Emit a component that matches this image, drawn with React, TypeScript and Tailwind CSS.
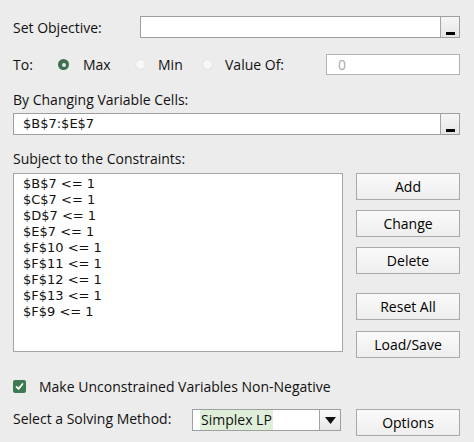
import React from 'react';

const constraints = [
  '$B$7 <= 1',
  '$C$7 <= 1',
  '$D$7 <= 1',
  '$E$7 <= 1',
  '$F$10 <= 1',
  '$F$11 <= 1',
  '$F$12 <= 1',
  '$F$13 <= 1',
  '$F$9 <= 1',
];

const cellFont = { fontFamily: '"DejaVu Sans", "Open Sans", sans-serif' };

const RefButton = () => (
  <div className="w-[19px] h-full border-l border-[#a3a3a3] bg-gradient-to-b from-[#f6f6f6] to-[#e6e6e6] flex items-end justify-center pb-[2px]">
    <div className="w-[9px] h-[3px] bg-black" />
  </div>
);

const Radio = ({ checked }: { checked?: boolean }) =>
  checked ? (
    <span className="w-[11px] h-[11px] rounded-full bg-[#3f6f52] flex items-center justify-center shrink-0">
      <span className="w-[4px] h-[4px] rounded-full bg-[#dfe9e2]" />
    </span>
  ) : (
    <span className="w-[11px] h-[11px] rounded-full bg-[#f7f7f7] border border-[#e2e2e2] shrink-0" />
  );

const Btn = ({ label, className = '' }: { label: string; className?: string }) => (
  <button
    className={`w-[104px] h-[27px] border border-[#a9a9a9] bg-gradient-to-b from-[#fafafa] to-[#eeeeee] text-[14px] text-black flex items-center justify-center ${className}`}
  >
    {label}
  </button>
);

export default function App() {
  return (
    <div
      className="w-[474px] h-[442px] overflow-hidden bg-[#ececec] text-[14px] text-[#111]"
      style={{ fontFamily: '"Open Sans", "Liberation Sans", sans-serif' }}
    >
      <div className="pl-[13px] pr-[14px] pt-[16px]">
        {/* Set Objective */}
        <div className="flex items-center h-[22px]">
          <span className="w-[127px]">Set Objective:</span>
          <div className="flex-1 h-[22px] bg-white border border-[#9f9f9f] flex justify-end">
            <RefButton />
          </div>
        </div>

        {/* To row */}
        <div className="flex items-center h-[21px] mt-[16px]">
          <span className="w-[45px]">To:</span>
          <Radio checked />
          <span className="ml-[14px] w-[52px]">Max</span>
          <Radio />
          <span className="ml-[12px] w-[44px]">Min</span>
          <Radio />
          <span className="ml-[12px] flex-1">Value Of:</span>
          <div className="w-[134px] h-[21px] bg-white border border-[#b3b3b3] pl-[11px] text-[#a8a8a8] flex items-center">
            0
          </div>
        </div>

        {/* Changing cells */}
        <div className="mt-[15px] h-[20px] leading-[20px]">By Changing Variable Cells:</div>
        <div className="mt-[3px] h-[22px] bg-white border border-[#9f9f9f] flex items-center">
          <span className="pl-[9px] flex-1 text-[13px]" style={cellFont}>
            $B$7:$E$7
          </span>
          <RefButton />
        </div>

        {/* Constraints */}
        <div className="mt-[14px] h-[20px] leading-[20px]">Subject to the Constraints:</div>
        <div className="mt-[4px] flex">
          <div
            className="w-[330px] h-[179px] bg-white border border-[#a5a5a5] pl-[9px] pt-[2px] text-[13px]"
            style={cellFont}
          >
            {constraints.map((c) => (
              <div key={c} className="leading-[16px]">
                {c}
              </div>
            ))}
          </div>
          <div className="ml-[13px] flex flex-col">
            <Btn label="Add" />
            <Btn label="Change" className="mt-[10px]" />
            <Btn label="Delete" className="mt-[10px]" />
            <Btn label="Reset All" className="mt-[19px]" />
            <Btn label="Load/Save" className="mt-[11px]" />
          </div>
        </div>

        {/* Checkbox */}
        <div className="mt-[18px] h-[20px] flex items-center">
          <span className="w-[13px] h-[13px] rounded-[2px] bg-[#3d7a53] flex items-center justify-center">
            <svg width="9" height="9" viewBox="0 0 9 9">
              <path d="M1.5 4.8 L3.6 6.9 L7.5 2" fill="none" stroke="white" strokeWidth="1.7" strokeLinecap="round" strokeLinejoin="round" />
            </svg>
          </span>
          <span className="ml-[13px]">Make Unconstrained Variables Non-Negative</span>
        </div>

        {/* Solving method */}
        <div className="mt-[13px] flex items-start">
          <span className="w-[179px] h-[22px] leading-[20px]">Select a Solving Method:</span>
          <div className="w-[149px] h-[22px] bg-white border border-[#9f9f9f] flex items-center">
            <span className="ml-[7px] px-[1px] bg-[#e0efd9] leading-[20px]">Simplex LP</span>
            <span className="flex-1" />
            <div className="w-[21px] h-full border-l border-[#a3a3a3] bg-gradient-to-b from-[#f8f8f8] to-[#e8e8e8] flex items-center justify-center">
              <svg width="11" height="7" viewBox="0 0 11 7">
                <path d="M0 0 L11 0 L5.5 7 Z" fill="#111" />
              </svg>
            </div>
          </div>
          <Btn label="Options" className="ml-[15px]" />
        </div>
      </div>
      <div className="mt-[9px] mx-[13px] h-[10px] border-t border-[#d2d2d2] bg-[#e5e5e5]" />
    </div>
  );
}
